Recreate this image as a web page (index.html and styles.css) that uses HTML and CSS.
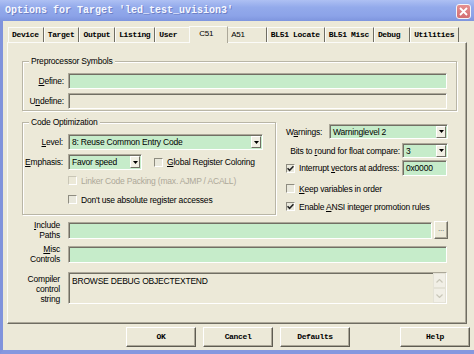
FILE: index.html
```html
<!DOCTYPE html>
<html lang="en">
<head>
    <meta charset="UTF-8">
    <meta name="viewport" content="width=device-width, initial-scale=1.0">
    <title>Options for Target</title>
    <link rel="stylesheet" href="styles.css">
</head>
<body>
    <div class="window">
        <!-- Title Bar -->
        <div class="titlebar">
            <span class="title">Options for Target 'led_test_uvision3'</span>
            <span class="close">
                <svg width="9" height="9" viewBox="0 0 9 9"><path d="M1 1L8 8M8 1L1 8" stroke="#fff" stroke-width="1.8"/></svg>
            </span>
        </div>

        <div class="client">
            <!-- Tabs -->
            <div class="tabs">
                <span class="tab">Device</span>
                <span class="tab">Target</span>
                <span class="tab">Output</span>
                <span class="tab">Listing</span>
                <span class="tab tab-user">User</span>
                <span class="tab active">C51</span>
                <span class="tab tab-a51">A51</span>
                <span class="tab">BL51 Locate</span>
                <span class="tab">BL51 Misc</span>
                <span class="tab tab-debug">Debug</span>
                <span class="tab">Utilities</span>
            </div>

            <div class="panel">
                <!-- Preprocessor Symbols -->
                <div class="group preproc">
                    <span class="legend">Preprocessor Symbols</span>
                    <div class="row">
                        <label class="lbl"><u>D</u>efine:</label>
                        <div class="field green"></div>
                    </div>
                    <div class="row gap4">
                        <label class="lbl">U<u>n</u>define:</label>
                        <div class="field"></div>
                    </div>
                </div>

                <div class="middle">
                    <!-- Code Optimization -->
                    <div class="group codeopt">
                        <span class="legend">Code Optimization</span>
                        <div class="row">
                            <label class="lbl"><u>L</u>evel:</label>
                            <div class="combo green grow">
                                <span class="value">8: Reuse Common Entry Code</span>
                                <span class="arrow"><svg width="5" height="3" viewBox="0 0 5 3"><path d="M0 0H5L2.5 3Z"/></svg></span>
                            </div>
                        </div>
                        <div class="row gap4">
                            <label class="lbl"><u>E</u>mphasis:</label>
                            <div class="combo green emphasis">
                                <span class="value">Favor speed</span>
                                <span class="arrow"><svg width="5" height="3" viewBox="0 0 5 3"><path d="M0 0H5L2.5 3Z"/></svg></span>
                            </div>
                            <div class="check global"><span class="box"></span><span><u>G</u>lobal Register Coloring</span></div>
                        </div>
                        <div class="check indent disabled linker"><span class="box"></span><span>Linker Code Packing (max. AJMP / ACALL)</span></div>
                        <div class="check indent dontuse"><span class="box"></span><span>Don't use absolute register accesses</span></div>
                    </div>

                    <!-- Right side options -->
                    <div class="options">
                        <div class="row">
                            <label class="side-lbl">W<u>a</u>rnings:</label>
                            <div class="combo green warnings">
                                <span class="value">Warninglevel 2</span>
                                <span class="arrow"><svg width="5" height="3" viewBox="0 0 5 3"><path d="M0 0H5L2.5 3Z"/></svg></span>
                            </div>
                        </div>
                        <div class="row bits">
                            <label class="side-lbl right">Bits to <u>r</u>ound for float compare:</label>
                            <div class="combo green small">
                                <span class="value">3</span>
                                <span class="arrow"><svg width="5" height="3" viewBox="0 0 5 3"><path d="M0 0H5L2.5 3Z"/></svg></span>
                            </div>
                        </div>
                        <div class="row interrupt">
                            <div class="check grow"><span class="box"><svg width="7" height="7" viewBox="0 0 7 7"><path d="M0.5 3.2L2.6 5.3L6.5 1.2" fill="none" stroke="#222" stroke-width="1.6"/></svg></span><span>Interrupt <u>v</u>ectors at address:</span></div>
                            <div class="field green small"><span class="value">0x0000</span></div>
                        </div>
                        <div class="check keep"><span class="box"></span><span><u>K</u>eep variables in order</span></div>
                        <div class="check ansi"><span class="box"><svg width="7" height="7" viewBox="0 0 7 7"><path d="M0.5 3.2L2.6 5.3L6.5 1.2" fill="none" stroke="#222" stroke-width="1.6"/></svg></span><span>Enable <u>A</u>NSI integer promotion rules</span></div>
                    </div>
                </div>

                <!-- Include / Misc / Compiler string -->
                <div class="row include">
                    <label class="lbl multi"><u>I</u>nclude<br>Paths</label>
                    <div class="field green grow"></div>
                    <span class="dots">...</span>
                </div>
                <div class="row misc">
                    <label class="lbl multi"><u>M</u>isc<br>Controls</label>
                    <div class="field green grow"></div>
                </div>
                <div class="row compiler">
                    <label class="lbl multi">Compiler<br>control<br>string</label>
                    <div class="field grow area">
                        <span class="value">BROWSE DEBUG OBJECTEXTEND</span>
                        <div class="scroll">
                            <span class="sbtn"><svg width="7" height="4" viewBox="0 0 7 4"><path d="M0.5 3.5L3.5 0.5L6.5 3.5" fill="none" stroke="#c9c7b9" stroke-width="1.2"/></svg></span>
                            <span class="sbtn"><svg width="7" height="4" viewBox="0 0 7 4"><path d="M0.5 0.5L3.5 3.5L6.5 0.5" fill="none" stroke="#c9c7b9" stroke-width="1.2"/></svg></span>
                        </div>
                    </div>
                </div>
            </div>

            <!-- Dialog Buttons -->
            <div class="buttons">
                <span class="btn">OK</span>
                <span class="btn">Cancel</span>
                <span class="btn">Defaults</span>
                <span class="btn help">Help</span>
            </div>
        </div>
    </div>
</body>
</html>
```

FILE: styles.css
```css
* {
    box-sizing: border-box;
}

body {
    margin: 0;
    overflow: hidden;
    background-color: #ece9d8;
    font-family: "Liberation Sans", Arial, sans-serif;
    font-size: 8.5px;
    letter-spacing: -0.2px;
    color: #000;
}

.window {
    width: 480px;
    height: 354px;
    display: flex;
    flex-direction: column;
}

/* Title bar */
.titlebar {
    height: 21px;
    display: flex;
    align-items: center;
    background: linear-gradient(#aec0f3, #93aaeb 35%, #8ca3e8 75%, #7e95de);
}

.title {
    padding-left: 5px;
    font-family: "Liberation Mono", monospace;
    font-size: 10px;
    font-weight: bold;
    letter-spacing: 0;
    color: #f6f8ff;
    text-shadow: 1px 1px 0 #6d80c6;
}

.close {
    margin: 1px 9px 0 auto;
    width: 15px;
    height: 15px;
    border: 1px solid #f4f4f8;
    border-radius: 3px;
    background: linear-gradient(#e58f90, #d36e72);
    display: flex;
    align-items: center;
    justify-content: center;
}

.client {
    flex: 1;
    display: flex;
    flex-direction: column;
    border-left: 3px solid #8093dc;
    border-bottom: 4px solid #8598df;
    padding-left: 4px;
}

/* Tabs */
.tabs {
    height: 17px;
    margin-top: 4px;
    padding-left: 1px;
    display: flex;
    align-items: flex-end;
}

.tab {
    height: 15px;
    padding: 0 4px 0 3px;
    border-top: 1px solid #fbfbf8;
    border-left: 1px solid #fbfbf8;
    border-right: 1px solid #6f6d62;
    font-family: "Liberation Mono", monospace;
    font-size: 8px;
    font-weight: bold;
    letter-spacing: -0.35px;
    line-height: 14px;
    white-space: nowrap;
}

.tab-user {
    padding-right: 13px;
}

.tab-a51 {
    padding: 0 21px 0 3px;
    font-family: "Liberation Sans", Arial, sans-serif;
    font-weight: normal;
    letter-spacing: -0.2px;
}

.tab-debug {
    padding-right: 9px;
}

.tab.active {
    height: 17px;
    margin: 0 -1px -1px -2px;
    padding: 0 14px 0 9px;
    position: relative;
    z-index: 1;
    background: #ece9d8;
    border-right: 1px solid #aca899;
    font-family: "Liberation Sans", Arial, sans-serif;
    font-weight: normal;
    letter-spacing: -0.2px;
    line-height: 13px;
}

/* Tab page */
.panel {
    width: 460px;
    height: 282px;
    padding: 18px 9px 19px 14px;
    border: 1px solid;
    border-color: #fbfbf8 #6f6d62 #6f6d62 #fbfbf8;
    box-shadow: inset -1px -1px 0 #aca899;
    display: flex;
    flex-direction: column;
}

.group {
    position: relative;
    border: 1px solid #b9b6a6;
    box-shadow: 1px 1px 0 #fff, inset 1px 1px 0 #fff;
}

.legend {
    position: absolute;
    top: -6px;
    left: 6px;
    padding: 0 2px;
    background: #ece9d8;
    line-height: 10px;
}

.row {
    display: flex;
    align-items: center;
}

.gap4 {
    margin-top: 4px;
}

.grow {
    flex: 1;
}

.lbl {
    width: 41px;
    margin-right: 4px;
    text-align: right;
    white-space: nowrap;
}

.preproc {
    height: 53px;
    padding: 11px 9px 0 0;
}

.field {
    height: 16px;
    flex: 1;
    border: 1px solid;
    border-color: #aca899 #fff #fff #aca899;
    box-shadow: inset 1px 1px 0 #716f64;
    display: flex;
    align-items: center;
}

.green {
    background: #c6ecca;
}

.value {
    padding-left: 3px;
    white-space: nowrap;
}

/* Combo boxes */
.combo {
    height: 16px;
    border: 1px solid;
    border-color: #aca899 #fff #fff #aca899;
    box-shadow: inset 1px 1px 0 #716f64;
    display: flex;
    align-items: center;
    justify-content: space-between;
}

.arrow {
    width: 10px;
    height: 12px;
    margin-right: 1px;
    background: #f1efe4;
    border: 1px solid;
    border-color: #fff #716f64 #716f64 #fff;
    display: flex;
    align-items: center;
    justify-content: center;
}

.middle {
    margin-top: 11px;
    display: flex;
}

.codeopt {
    width: 254px;
    height: 93px;
    padding: 11px 12px 0 0;
}

.codeopt .lbl {
    width: 40px;
    margin-right: 5px;
}

.emphasis {
    width: 74px;
}

/* Checkboxes */
.check {
    display: flex;
    align-items: center;
    height: 13px;
    white-space: nowrap;
}

.box {
    width: 9px;
    height: 9px;
    margin-right: 4px;
    border: 1px solid;
    border-color: #8e8c80 #fff #fff #8e8c80;
    background: #e9e8dc;
    display: flex;
    align-items: center;
    justify-content: center;
}

.global {
    margin-left: 12px;
}

.indent {
    padding-left: 45px;
}

.linker {
    margin-top: 4px;
}

.dontuse {
    margin-top: 6px;
}

.disabled {
    color: #aca899;
}

.disabled .box {
    background: #ece9d8;
    border-color: #c9c6b6 #fff #fff #c9c6b6;
}

/* Right-hand options */
.options {
    width: 162px;
    margin: 2px 0 0 10px;
    display: flex;
    flex-direction: column;
}

.side-lbl {
    width: 43px;
    white-space: nowrap;
}

.side-lbl.right {
    flex: 1;
    width: auto;
    padding-right: 2px;
    text-align: right;
}

.warnings {
    flex: 1;
    height: 15px;
}

.bits {
    margin-top: 4px;
}

.combo.small {
    width: 46px;
    height: 15px;
}

.interrupt {
    margin-top: 2px;
}

.field.small {
    flex: none;
    width: 45px;
    margin-right: 1px;
}

.keep {
    margin-top: 6px;
}

.ansi {
    margin-top: 5px;
}

/* Bottom text fields */
.multi {
    width: 40px;
    margin-right: 6px;
    padding-right: 2px;
    line-height: 10px;
}

.include {
    height: 18px;
    margin-top: 6px;
    padding-right: 9px;
}

.include .field {
    height: 17px;
    margin-right: 2px;
}

.dots {
    width: 14px;
    height: 18px;
    border: 1px solid;
    border-color: #fff #716f64 #716f64 #fff;
    box-shadow: inset -1px -1px 0 #aca899;
    font-size: 8px;
    text-align: center;
    line-height: 13px;
    color: #555;
}

.misc {
    margin-top: 5px;
    padding-right: 10px;
}

.misc .field {
    height: 17px;
}

.compiler {
    margin-top: 8px;
    padding-right: 10px;
    align-items: flex-start;
}

.compiler .multi {
    padding-top: 2px;
}

.area {
    height: 32px;
    align-items: flex-start;
    justify-content: space-between;
}

.area .value {
    padding-top: 3px;
}

.scroll {
    width: 13px;
    height: 30px;
    display: flex;
    flex-direction: column;
}

.sbtn {
    flex: 1;
    border: 1px solid #e4e2d6;
    background: #f1efe6;
    display: flex;
    align-items: center;
    justify-content: center;
}

/* Dialog buttons */
.buttons {
    margin: 3px 0 0 119px;
    display: flex;
}

.btn {
    width: 70px;
    height: 20px;
    margin-right: 7px;
    border: 1px solid;
    border-color: #fff #5e5c52 #5e5c52 #fff;
    box-shadow: inset -1px -1px 0 #aca899;
    font-family: "Liberation Mono", monospace;
    font-size: 8px;
    font-weight: bold;
    letter-spacing: -0.35px;
    text-align: center;
    line-height: 18px;
}

.help {
    margin-left: 43px;
}
```
